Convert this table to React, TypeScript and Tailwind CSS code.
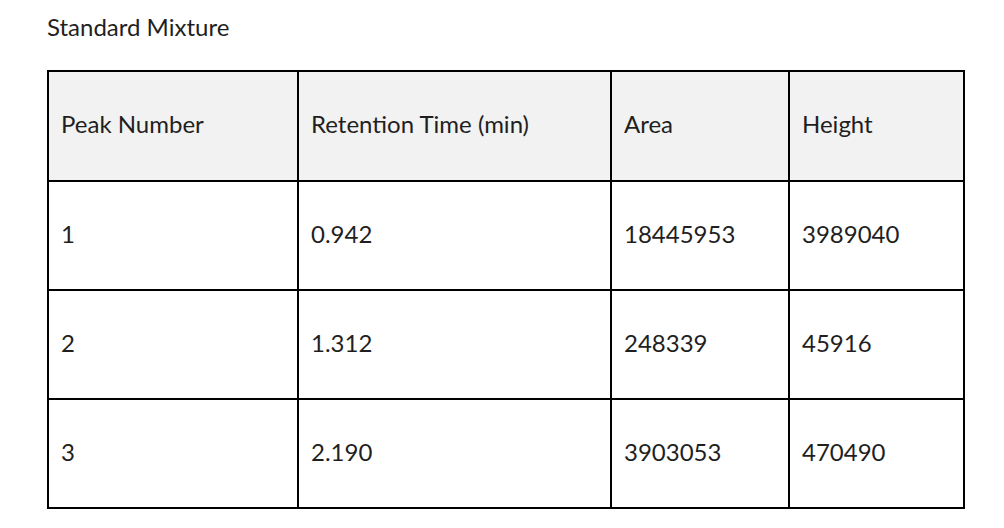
const header = ["Peak Number", "Retention Time (min)", "Area", "Height"];

const rows = [
  ["1", "0.942", "18445953", "3989040"],
  ["2", "1.312", "248339", "45916"],
  ["3", "2.190", "3903053", "470490"],
];

export default function App() {
  return (
    <div className="min-h-screen bg-white pl-[47px] pt-[13px] text-[#1f1f1f] [font-family:Lato,'Noto_Sans',sans-serif]">
      <h2 className="text-[24px] leading-[28px] font-normal">Standard Mixture</h2>

      <table className="mt-[29px] w-[916px] table-fixed border-collapse border-2 border-black text-[24px]">
        <colgroup>
          <col className="w-[250px]" />
          <col className="w-[313px]" />
          <col className="w-[178px]" />
          <col className="w-[175px]" />
        </colgroup>
        <thead>
          <tr className="h-[110px] bg-[#f2f2f2]">
            {header.map((h) => (
              <th key={h} className="border-2 border-black pl-[12px] pr-[12px] pb-[4px] text-left font-normal">
                {h}
              </th>
            ))}
          </tr>
        </thead>
        <tbody>
          {rows.map((r) => (
            <tr key={r[0]} className="h-[109px]">
              {r.map((c, i) => (
                <td key={i} className="border-2 border-black pl-[12px] pr-[12px] pb-[4px]">
                  {c}
                </td>
              ))}
            </tr>
          ))}
        </tbody>
      </table>
    </div>
  );
}
